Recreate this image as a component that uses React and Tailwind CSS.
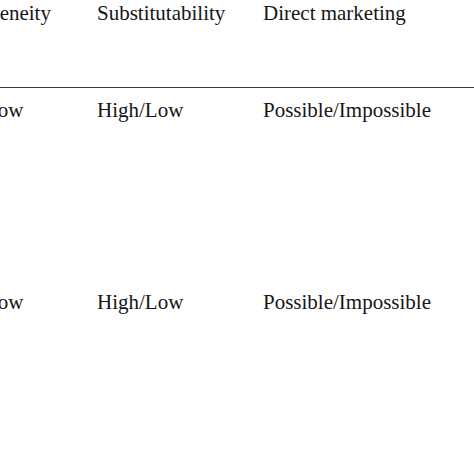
import React from "react";

const rows = [
  ["High/Low", "High/Low", "Possible/Impossible"],
  ["High/Low", "High/Low", "Possible/Impossible"],
];

const App = () => {
  return (
    <div className="w-[474px] h-[474px] overflow-hidden bg-white text-[#161616] text-[21px] leading-[24px] font-['Liberation_Serif',serif]">
      {/* Header */}
      <div className="flex h-[88px] pt-[1px] border-b border-[#3c3c3c] whitespace-nowrap">
        <div className="w-[165px] shrink-0 -ml-[68px]">Heterogeneity</div>
        <div className="w-[166px] shrink-0">Substitutability</div>
        <div className="shrink-0">Direct marketing</div>
      </div>
      {/* Body */}
      <div className="flex flex-col gap-[168px] pt-[10px]">
        {rows.map((r, i) => (
          <div key={i} className="flex whitespace-nowrap">
            <div className="w-[160px] shrink-0 -ml-[63px]">{r[0]}</div>
            <div className="w-[166px] shrink-0">{r[1]}</div>
            <div className="shrink-0">{r[2]}</div>
          </div>
        ))}
      </div>
    </div>
  );
};

export default App;
